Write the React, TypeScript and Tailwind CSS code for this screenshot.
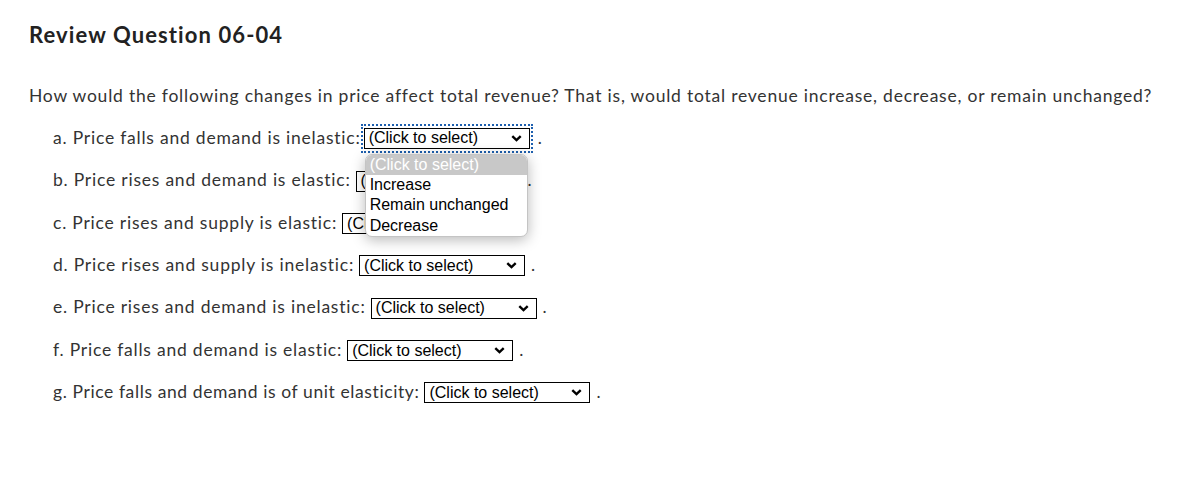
import React from 'react';

const questions = [
  'a. Price falls and demand is inelastic:',
  'b. Price rises and demand is elastic:',
  'c. Price rises and supply is elastic:',
  'd. Price rises and supply is inelastic:',
  'e. Price rises and demand is inelastic:',
  'f. Price falls and demand is elastic:',
  'g. Price falls and demand is of unit elasticity:',
];

const options = ['Increase', 'Remain unchanged', 'Decrease'];

const Chevron = () => (
  <svg width="11" height="7" viewBox="0 0 11 7" className="shrink-0">
    <path d="M1.3 1.2 L5.5 5.2 L9.7 1.2" fill="none" stroke="#000" strokeWidth="2.4" />
  </svg>
);

const SelectBox: React.FC<{ focused?: boolean; open?: boolean }> = ({ focused, open }) => (
  <span className="relative inline-flex">
    <span
      className={
        focused
          ? 'inline-flex px-[2px] py-[3px] outline-2 outline-dotted outline-[#1d5fae] -outline-offset-1'
          : 'inline-flex'
      }
    >
      <span className="inline-flex h-[21px] w-[166px] items-center justify-between border border-black bg-white pl-[4px] pr-[7px] font-['Liberation_Sans',Arial,sans-serif] text-[16px] leading-none tracking-normal text-black">
        <span>(Click to select)</span>
        <Chevron />
      </span>
    </span>
    {open && (
      <span className="absolute left-[3px] top-[29px] z-10 flex w-[163px] flex-col overflow-hidden rounded-[7px] border border-[#c4c4c4] bg-white font-['Liberation_Sans',Arial,sans-serif] text-[16px] leading-[20.3px] tracking-normal text-black shadow-[0_3px_14px_rgba(0,0,0,0.28)]">
        <span className="bg-[#c8c8c8] px-[4px] text-white">(Click to select)</span>
        {options.map((o) => (
          <span key={o} className="px-[4px]">
            {o}
          </span>
        ))}
      </span>
    )}
  </span>
);

export default function App() {
  return (
    <div className="min-h-[477px] bg-white px-[29px] pt-[22px] font-['Lato',sans-serif] text-[#333]">
      <h2 className="text-[22px] font-bold leading-[26px] tracking-[1.1px] text-[#222]">Review Question 06-04</h2>
      <p className="mt-[36px] text-[17.5px] leading-[24px] tracking-[0.78px]">
        How would the following changes in price affect total revenue? That is, would total revenue increase,
        decrease, or remain unchanged?
      </p>
      <div className="mt-[18px] flex flex-col gap-[18.33px] pl-[24px]">
        {questions.map((q, i) => (
          <div key={q} className="flex h-[24px] items-center text-[17.5px] tracking-[0.78px]">
            <span className={i === 6 ? 'tracking-[0.6px]' : ''}>{q}</span>
            <span className={i === 0 ? 'ml-[1px]' : 'ml-[5px]'}>
              <SelectBox focused={i === 0} open={i === 0} />
            </span>
            <span className="ml-[6px]">.</span>
          </div>
        ))}
      </div>
    </div>
  );
}
